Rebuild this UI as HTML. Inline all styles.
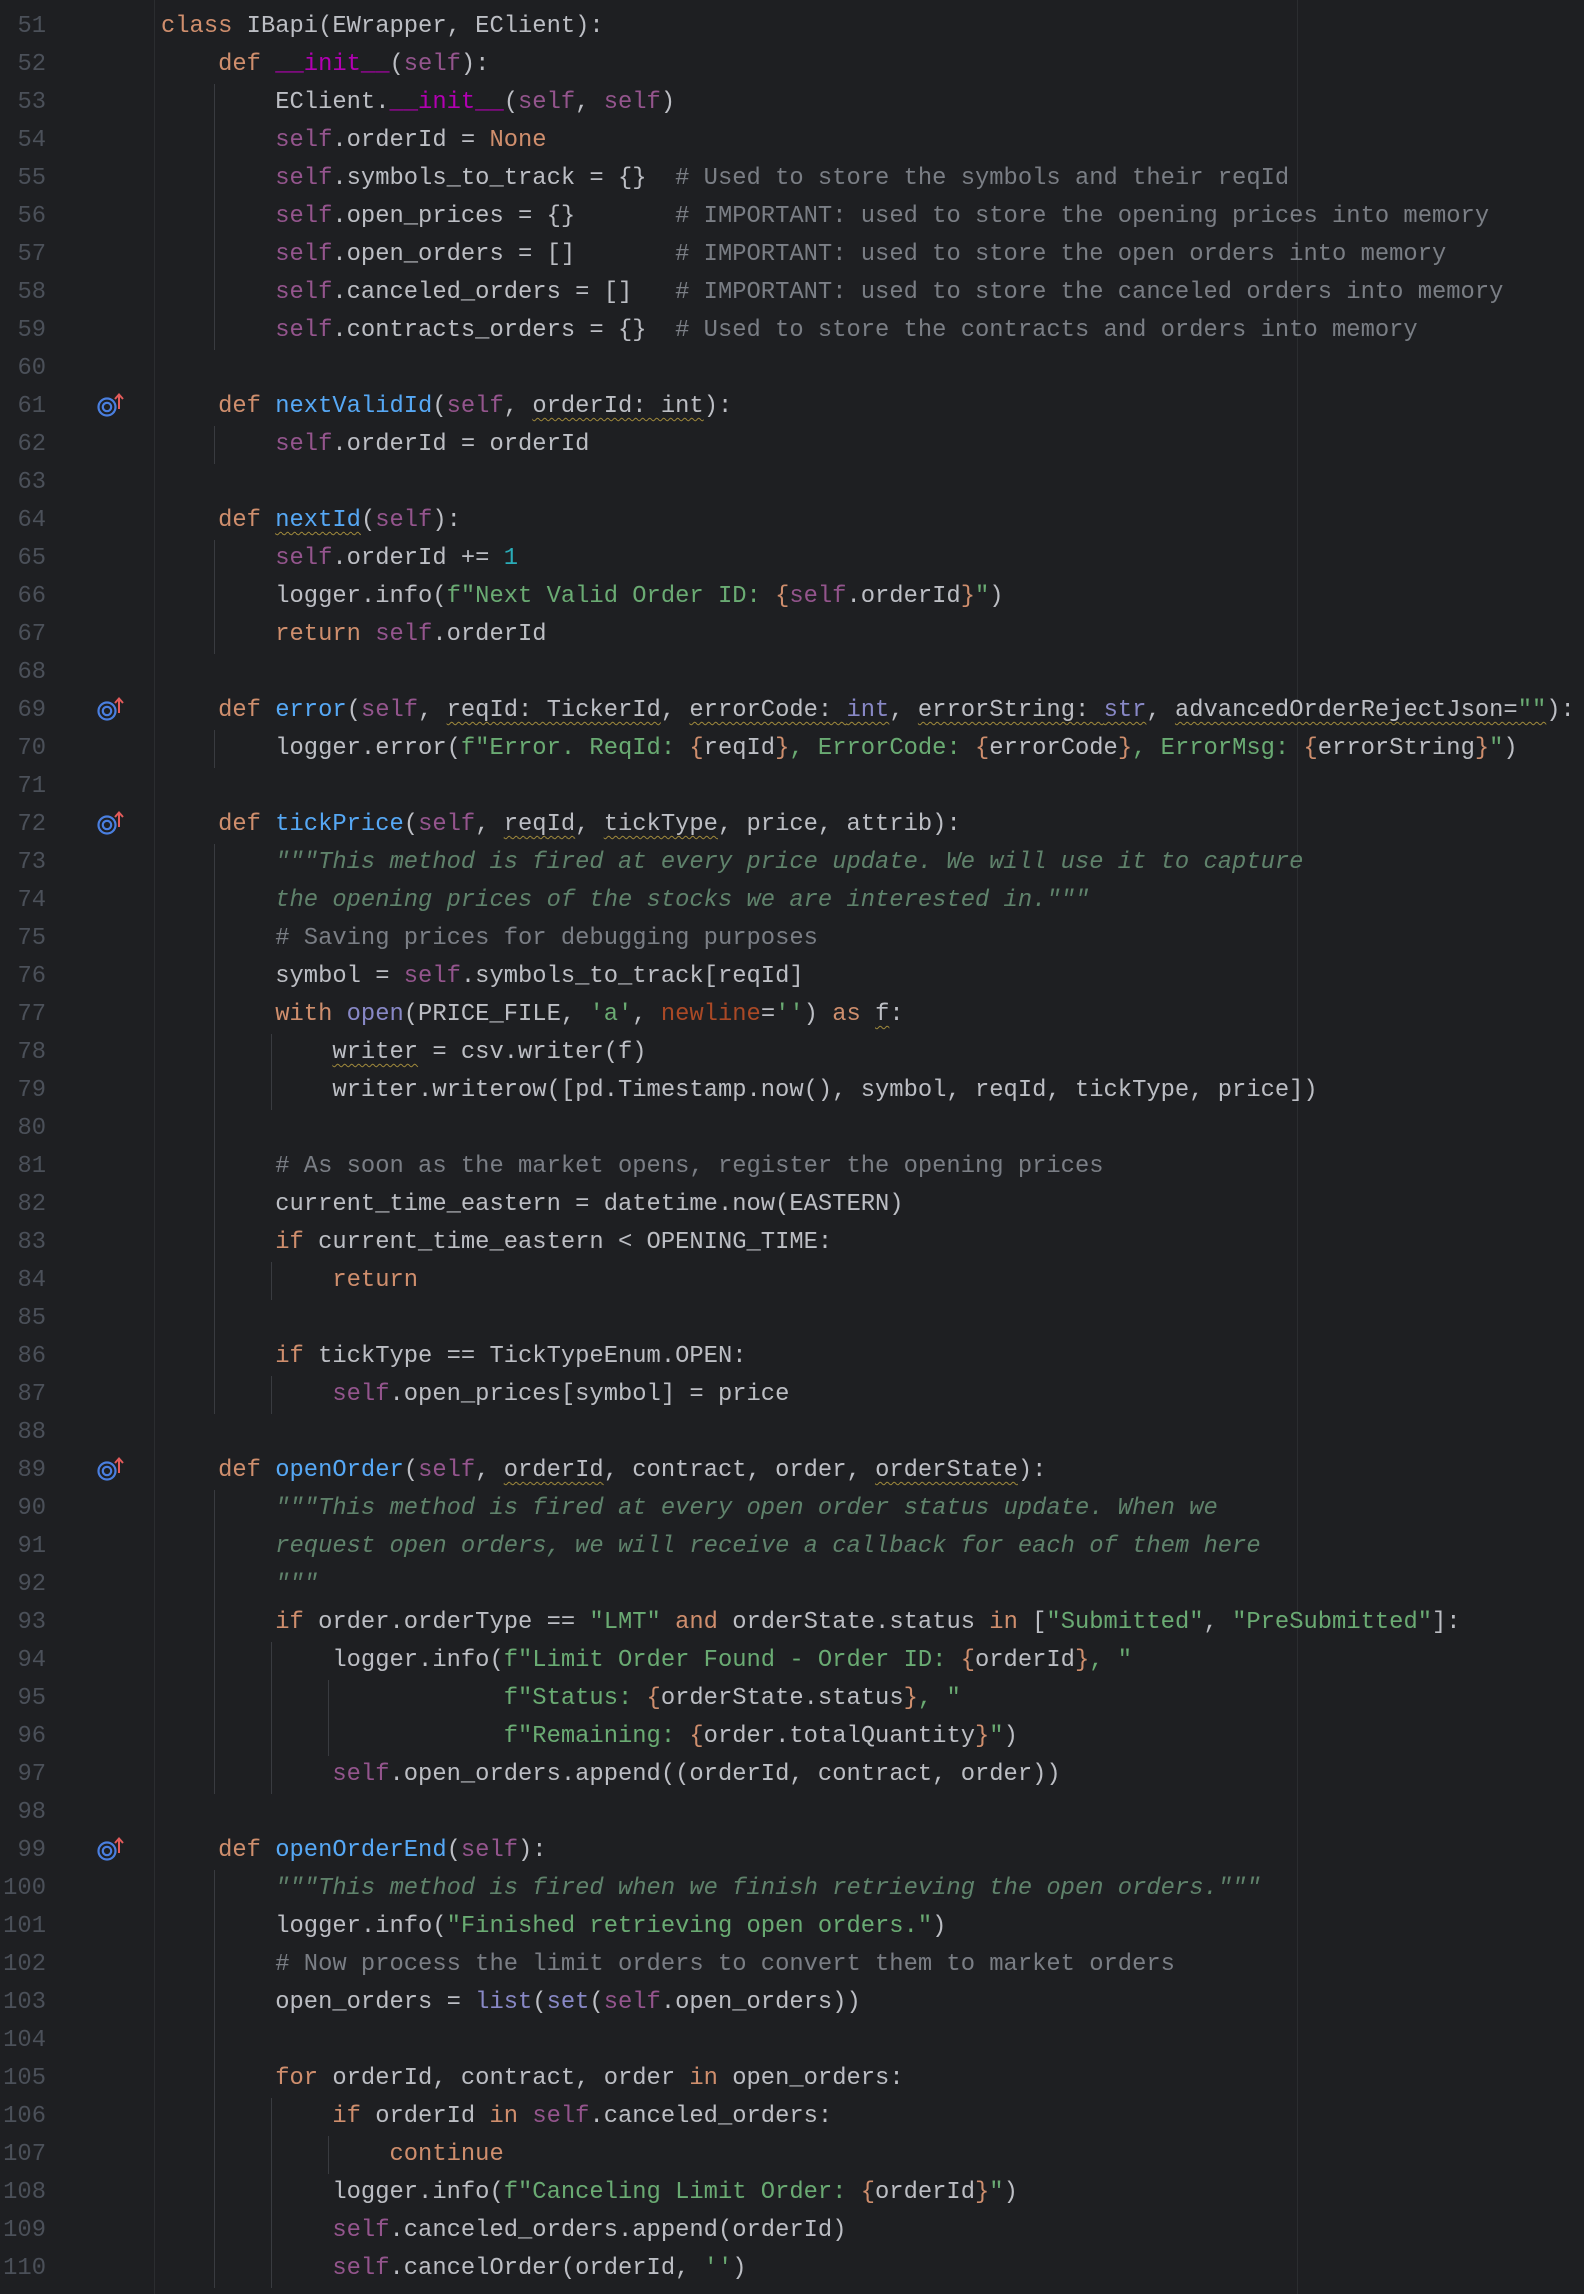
<!DOCTYPE html>
<html><head><meta charset="utf-8">
<style>
html,body{margin:0;padding:0;background:#1e1f22;}
body{width:1584px;height:2294px;position:relative;overflow:hidden;font-family:"Liberation Mono","DejaVu Sans Mono",monospace;font-size:23.8px;color:#bcbec4;}
.ln{position:absolute;left:0;width:46px;text-align:right;color:#4b5059;height:38px;line-height:38px;}
.cl{position:absolute;left:161px;height:38px;line-height:38px;white-space:pre;}
.g{position:absolute;width:1px;height:38px;background:#393b40;}
.k{color:#cf8e6d}.s{color:#94558d}.f{color:#56a8f5}.st{color:#6aab73}.c{color:#7a7e85}
.d{color:#5f826b;font-style:italic}.n{color:#2aacb8}.m{color:#b200b2}.b{color:#8888c6}.p{color:#aa4926}
.w{text-decoration:underline wavy #a08a3c;text-decoration-thickness:1px;text-underline-offset:5px}
.div{position:absolute;left:154px;top:0;width:1px;height:2294px;background:#2b2d30;}
.rm{position:absolute;left:1297px;top:0;width:1px;height:2294px;background:#2b2d30;}
.ic{position:absolute;left:96px;}
</style></head><body>
<div class="div"></div><div class="rm"></div>
<div id="code">
<div class="cl" data-n="51"><span class="k">class</span> IBapi(EWrapper, EClient):</div>
<div class="cl" data-n="52">    <span class="k">def</span> <span class="m">__init__</span>(<span class="s">self</span>):</div>
<div class="cl" data-n="53">        EClient.<span class="m">__init__</span>(<span class="s">self</span>, <span class="s">self</span>)</div>
<div class="cl" data-n="54">        <span class="s">self</span>.orderId = <span class="k">None</span></div>
<div class="cl" data-n="55">        <span class="s">self</span>.symbols_to_track = {}  <span class="c"># Used to store the symbols and their reqId</span></div>
<div class="cl" data-n="56">        <span class="s">self</span>.open_prices = {}       <span class="c"># IMPORTANT: used to store the opening prices into memory</span></div>
<div class="cl" data-n="57">        <span class="s">self</span>.open_orders = []       <span class="c"># IMPORTANT: used to store the open orders into memory</span></div>
<div class="cl" data-n="58">        <span class="s">self</span>.canceled_orders = []   <span class="c"># IMPORTANT: used to store the canceled orders into memory</span></div>
<div class="cl" data-n="59">        <span class="s">self</span>.contracts_orders = {}  <span class="c"># Used to store the contracts and orders into memory</span></div>
<div class="cl" data-n="60"></div>
<div class="cl" data-n="61" data-i="1">    <span class="k">def</span> <span class="f">nextValidId</span>(<span class="s">self</span>, <span class="w">orderId: int</span>):</div>
<div class="cl" data-n="62">        <span class="s">self</span>.orderId = orderId</div>
<div class="cl" data-n="63"></div>
<div class="cl" data-n="64">    <span class="k">def</span> <span class="f w">nextId</span>(<span class="s">self</span>):</div>
<div class="cl" data-n="65">        <span class="s">self</span>.orderId += <span class="n">1</span></div>
<div class="cl" data-n="66">        logger.info(<span class="st">f"Next Valid Order ID: </span><span class="k">{</span><span class="s">self</span>.orderId<span class="k">}</span><span class="st">"</span>)</div>
<div class="cl" data-n="67">        <span class="k">return</span> <span class="s">self</span>.orderId</div>
<div class="cl" data-n="68"></div>
<div class="cl" data-n="69" data-i="1">    <span class="k">def</span> <span class="f">error</span>(<span class="s">self</span>, <span class="w">reqId: TickerId</span>, <span class="w">errorCode: <span class="b">int</span></span>, <span class="w">errorString: <span class="b">str</span></span>, <span class="w">advancedOrderRejectJson=<span class="st">""</span></span>):</div>
<div class="cl" data-n="70">        logger.error(<span class="st">f"Error. ReqId: </span><span class="k">{</span>reqId<span class="k">}</span><span class="st">, ErrorCode: </span><span class="k">{</span>errorCode<span class="k">}</span><span class="st">, ErrorMsg: </span><span class="k">{</span>errorString<span class="k">}</span><span class="st">"</span>)</div>
<div class="cl" data-n="71"></div>
<div class="cl" data-n="72" data-i="1">    <span class="k">def</span> <span class="f">tickPrice</span>(<span class="s">self</span>, <span class="w">reqId</span>, <span class="w">tickType</span>, price, attrib):</div>
<div class="cl" data-n="73">        <span class="d">"""This method is fired at every price update. We will use it to capture</span></div>
<div class="cl" data-n="74">        <span class="d">the opening prices of the stocks we are interested in."""</span></div>
<div class="cl" data-n="75">        <span class="c"># Saving prices for debugging purposes</span></div>
<div class="cl" data-n="76">        symbol = <span class="s">self</span>.symbols_to_track[reqId]</div>
<div class="cl" data-n="77">        <span class="k">with</span> <span class="b">open</span>(PRICE_FILE, <span class="st">'a'</span>, <span class="p">newline</span>=<span class="st">''</span>) <span class="k">as</span> <span class="w">f</span>:</div>
<div class="cl" data-n="78">            <span class="w">writer</span> = csv.writer(f)</div>
<div class="cl" data-n="79">            writer.writerow([pd.Timestamp.now(), symbol, reqId, tickType, price])</div>
<div class="cl" data-n="80"></div>
<div class="cl" data-n="81">        <span class="c"># As soon as the market opens, register the opening prices</span></div>
<div class="cl" data-n="82">        current_time_eastern = datetime.now(EASTERN)</div>
<div class="cl" data-n="83">        <span class="k">if</span> current_time_eastern &lt; OPENING_TIME:</div>
<div class="cl" data-n="84">            <span class="k">return</span></div>
<div class="cl" data-n="85"></div>
<div class="cl" data-n="86">        <span class="k">if</span> tickType == TickTypeEnum.OPEN:</div>
<div class="cl" data-n="87">            <span class="s">self</span>.open_prices[symbol] = price</div>
<div class="cl" data-n="88"></div>
<div class="cl" data-n="89" data-i="1">    <span class="k">def</span> <span class="f">openOrder</span>(<span class="s">self</span>, <span class="w">orderId</span>, contract, order, <span class="w">orderState</span>):</div>
<div class="cl" data-n="90">        <span class="d">"""This method is fired at every open order status update. When we</span></div>
<div class="cl" data-n="91">        <span class="d">request open orders, we will receive a callback for each of them here</span></div>
<div class="cl" data-n="92">        <span class="d">"""</span></div>
<div class="cl" data-n="93">        <span class="k">if</span> order.orderType == <span class="st">"LMT"</span> <span class="k">and</span> orderState.status <span class="k">in</span> [<span class="st">"Submitted"</span>, <span class="st">"PreSubmitted"</span>]:</div>
<div class="cl" data-n="94">            logger.info(<span class="st">f"Limit Order Found - Order ID: </span><span class="k">{</span>orderId<span class="k">}</span><span class="st">, "</span></div>
<div class="cl" data-n="95" data-c="4">                        <span class="st">f"Status: </span><span class="k">{</span>orderState.status<span class="k">}</span><span class="st">, "</span></div>
<div class="cl" data-n="96" data-c="4">                        <span class="st">f"Remaining: </span><span class="k">{</span>order.totalQuantity<span class="k">}</span><span class="st">"</span>)</div>
<div class="cl" data-n="97">            <span class="s">self</span>.open_orders.append((orderId, contract, order))</div>
<div class="cl" data-n="98"></div>
<div class="cl" data-n="99" data-i="1">    <span class="k">def</span> <span class="f">openOrderEnd</span>(<span class="s">self</span>):</div>
<div class="cl" data-n="100">        <span class="d">"""This method is fired when we finish retrieving the open orders."""</span></div>
<div class="cl" data-n="101">        logger.info(<span class="st">"Finished retrieving open orders."</span>)</div>
<div class="cl" data-n="102">        <span class="c"># Now process the limit orders to convert them to market orders</span></div>
<div class="cl" data-n="103">        open_orders = <span class="b">list</span>(<span class="b">set</span>(<span class="s">self</span>.open_orders))</div>
<div class="cl" data-n="104"></div>
<div class="cl" data-n="105">        <span class="k">for</span> orderId, contract, order <span class="k">in</span> open_orders:</div>
<div class="cl" data-n="106">            <span class="k">if</span> orderId <span class="k">in</span> <span class="s">self</span>.canceled_orders:</div>
<div class="cl" data-n="107">                <span class="k">continue</span></div>
<div class="cl" data-n="108">            logger.info(<span class="st">f"Canceling Limit Order: </span><span class="k">{</span>orderId<span class="k">}</span><span class="st">"</span>)</div>
<div class="cl" data-n="109">            <span class="s">self</span>.canceled_orders.append(orderId)</div>
<div class="cl" data-n="110">            <span class="s">self</span>.cancelOrder(orderId, <span class="st">''</span>)</div>
</div>
<script>
(function(){
var lines=[].slice.call(document.querySelectorAll('.cl'));
var ind=lines.map(function(e){var t=e.textContent;if(!t.trim())return -1;return Math.floor((t.length-t.replace(/^ +/,'').length)/4);});
for(var i=0;i<ind.length;i++){if(ind[i]<0){var p=-1,n=-1;for(var j=i-1;j>=0;j--)if(ind[j]>=0){p=ind[j];break;}for(var j=i+1;j<ind.length;j++)if(ind[j]>=0){n=ind[j];break;}ind[i]=Math.min(p<0?0:p,n<0?0:n);}}
lines.forEach(function(e,i){
 var top=8+i*38;e.style.top=top+'px';
 var ln=document.createElement('div');ln.className='ln';ln.style.top=top+'px';ln.textContent=e.getAttribute('data-n');document.body.appendChild(ln);
 var L=ind[i];if(e.getAttribute('data-c'))L=+e.getAttribute('data-c');
 for(var k=1;k<L;k++){var g=document.createElement('div');g.className='g';g.style.left=(214+57.1*(k-1))+'px';g.style.top=top+'px';document.body.appendChild(g);}
 if(e.getAttribute('data-i')){var s=document.createElementNS('http://www.w3.org/2000/svg','svg');s.setAttribute('width','36');s.setAttribute('height','30');s.setAttribute('class','ic');s.style.top=(top+2)+'px';
 s.innerHTML='<circle cx="11" cy="17" r="8.5" fill="none" stroke="#4a7fe0" stroke-width="2.2"/><circle cx="11" cy="17" r="4.2" fill="none" stroke="#4a7fe0" stroke-width="2.2"/><path d="M23 19V5M19 9l4-4.5 4 4.5" fill="none" stroke="#e35b5b" stroke-width="2"/>';
 document.body.appendChild(s);}
});
})();
</script>
</body></html>
